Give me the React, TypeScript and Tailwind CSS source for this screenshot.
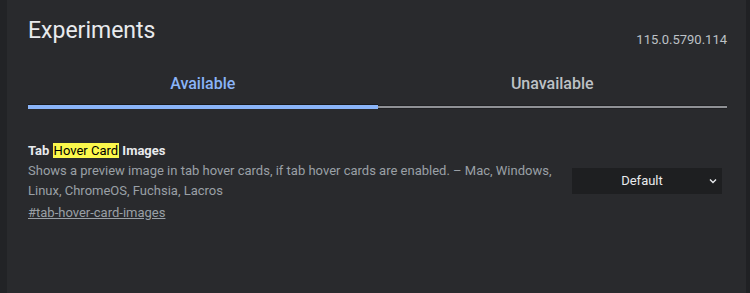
import React from "react";

export default function App() {
  return (
    <div
      className="w-[750px] h-[293px] flex bg-[#292a2d] overflow-hidden"
      style={{ fontFamily: "Roboto, 'Liberation Sans', sans-serif" }}
    >
      <div className="w-[7px] shrink-0 bg-[#222326]" />
      <div className="flex-1 pl-[21px] pr-[19px]">
        <div className="flex items-end justify-between pt-[17px]">
          <h1 className="text-[23px] leading-[28px] text-[#e8eaed]">Experiments</h1>
          <span className="text-[13px] leading-[16px] text-[#bdc1c6] mb-[-3px]">115.0.5790.114</span>
        </div>
        <div className="flex mt-[29px]">
          <div className="flex-1 flex flex-col">
            <div className="text-center text-[16px] leading-[20px] text-[#8ab4f8] font-medium">Available</div>
            <div className="mt-[10px] border-t border-[#18191b] h-[5px] bg-[#8ab4f8]" />
          </div>
          <div className="flex-1 flex flex-col">
            <div className="text-center text-[16px] leading-[20px] text-[#bdc1c6] font-medium">Unavailable</div>
            <div className="mt-[11px] h-[4px] border-y border-[#202124] bg-[#8f9195]" />
          </div>
        </div>
        <div className="flex items-start mt-[32px]">
          <div className="w-[530px]">
            <div className="text-[13px] leading-[20px] font-bold text-[#e8eaed]">
              Tab <mark className="bg-[#fbf84c] text-black font-normal px-[1px]">Hover Card</mark> Images
            </div>
            <p className="text-[13px] leading-[20px] text-[#9aa0a6]">
              Shows a preview image in tab hover cards, if tab hover cards are enabled. – Mac, Windows, Linux, ChromeOS, Fuchsia, Lacros
            </p>
            <a className="block mt-[2px] text-[13px] leading-[20px] text-[#9aa0a6] underline">#tab-hover-card-images</a>
          </div>
          <div className="ml-auto mr-[5px] mt-[27px] w-[150px] h-[26px] bg-[#1e1f21] flex items-center relative">
            <span className="flex-1 text-center text-[13px] text-[#e8eaed] pr-[10px]">Default</span>
            <svg className="absolute right-[4px] top-[8px]" width="10" height="10" viewBox="0 0 10 10">
              <path d="M2 3.5 L5 6.5 L8 3.5" fill="none" stroke="#e8eaed" strokeWidth="1.4" />
            </svg>
          </div>
        </div>
      </div>
      <div className="w-[4px] shrink-0 bg-[#202124]" />
    </div>
  );
}
